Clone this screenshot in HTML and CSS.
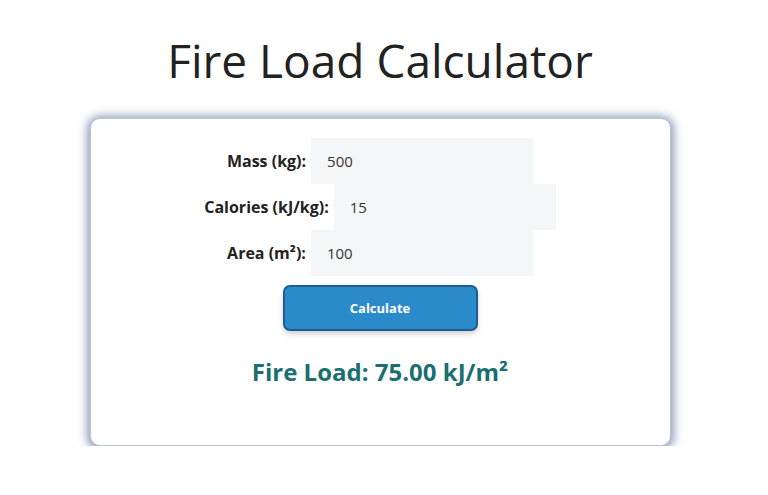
FILE: index.html
```html
<!DOCTYPE html>
<html lang="en">
<head>
<meta charset="utf-8">
<title>Fire Load Calculator</title>
<link rel="stylesheet" href="styles.css">
</head>
<body>
<h1 class="title">Fire Load Calculator</h1>
<div class="card">
  <div class="row">
    <label class="label" for="mass">Mass (kg):</label>
    <input class="field" id="mass" type="text" value="500">
  </div>
  <div class="row">
    <label class="label" for="cal">Calories (kJ/kg):</label>
    <input class="field" id="cal" type="text" value="15">
  </div>
  <div class="row">
    <label class="label" for="area">Area (m²):</label>
    <input class="field" id="area" type="text" value="100">
  </div>
  <div class="actions">
    <button class="btn" type="button">Calculate</button>
  </div>
  <div class="result">Fire Load: 75.00 kJ/m²</div>
</div>
</body>
</html>
```
FILE: styles.css
```css
html, body {
  background: #ffffff;
}
body {
  margin: 0;
  padding: 0 16px 0 8px;
  font-family: "Open Sans", "Noto Sans", sans-serif;
  color: #222;
}
.title {
  margin: 28px 0 0;
  text-align: center;
  font-weight: 400;
  font-size: 46px;
  line-height: 64px;
  color: #222;
}
.card {
  width: 581px;
  margin: 26px auto 0;
  box-sizing: border-box;
  height: 328px;
  background: #fff;
  border: 1px solid #b8c6d6;
  border-radius: 10px;
  box-shadow: 0 1px 10px 3px rgba(60, 95, 140, 0.6);
  padding: 19px 20px 20px;
}
.row {
  display: flex;
  justify-content: center;
  align-items: center;
  gap: 5px;
}
.label {
  font-weight: 700;
  font-size: 16px;
  color: #222;
}
.field {
  width: 222px;
  height: 46px;
  box-sizing: border-box;
  border: none;
  background: #f5f6f8;
  padding: 0 16px;
  font-family: "Open Sans", "Noto Sans", sans-serif;
  font-size: 15px;
  color: #333;
  outline: none;
}
.actions {
  display: flex;
  justify-content: center;
  margin-top: 9px;
}
.btn {
  width: 195px;
  height: 46px;
  background: #2b8bca;
  border: 2px solid #1d5d93;
  border-radius: 7px;
  color: #fff;
  font-family: "Open Sans", "Noto Sans", sans-serif;
  font-weight: 700;
  font-size: 13px;
  box-shadow: 0 3px 5px rgba(0, 0, 0, 0.18);
}
.result {
  margin-top: 24px;
  text-align: center;
  font-weight: 700;
  font-size: 24px;
  color: #1c6f70;
}
```
